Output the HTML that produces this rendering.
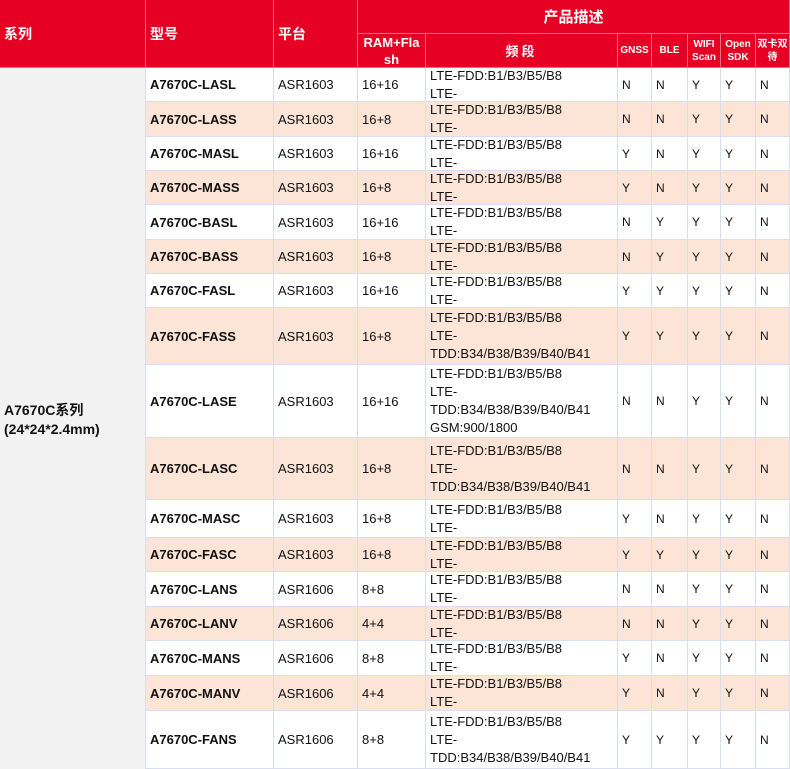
<!DOCTYPE html>
<html><head><meta charset="utf-8"><style>
*{margin:0;padding:0;box-sizing:border-box}
body{width:790px;height:769px;overflow:hidden;background:#fff;font-family:"Liberation Sans","Noto Sans CJK SC",sans-serif;color:#111;position:relative}
.h{position:absolute;background:#e60023;color:#fff;font-weight:bold;border-right:1px solid #f07080;border-bottom:1px solid #f07080;display:flex;align-items:center}
.r{position:absolute;left:146px;width:644px;display:flex}
.r>div{border-right:1px solid #d8def0;border-bottom:1px solid #d8def0;display:flex;align-items:center;overflow:hidden;padding-left:4px;font-size:13px}
.p{background:#fce4d6}
.c1{width:128px;font-weight:bold}.c2{width:84px}.c3{width:68px}
.c4{width:192px;line-height:18px}.c4 span{display:block}
.c5{width:34px}.c6{width:36px}.c7{width:33px}.c8{width:35px}.c9{width:34px}
.c5,.c6,.c7,.c8,.c9{font-size:12px!important}
.s{position:absolute;left:0;top:68px;width:146px;height:701px;background:#f2f2f2;border-right:1px solid #d8def0;display:flex;align-items:center;padding-left:4px;font-weight:bold;font-size:14px;line-height:19px;padding-top:2px}
</style></head><body>
<div class="h" style="left:0;top:0;width:146px;height:68px;padding-left:4px;font-size:14px">系列</div>
<div class="h" style="left:146px;top:0;width:128px;height:68px;padding-left:4px;font-size:14px">型号</div>
<div class="h" style="left:274px;top:0;width:84px;height:68px;padding-left:4px;font-size:14px">平台</div>
<div class="h" style="left:358px;top:0;width:432px;height:34px;justify-content:center;font-size:15px">产品描述</div>
<div class="h" style="left:358px;top:34px;width:68px;height:34px;justify-content:center;text-align:center;font-size:13px;line-height:17px">RAM+Fla<br>sh</div>
<div class="h" style="left:426px;top:34px;width:192px;height:34px;justify-content:center;font-size:13px;letter-spacing:3px">频段</div>
<div class="h" style="left:618px;top:34px;width:34px;height:34px;justify-content:center;font-size:10px">GNSS</div>
<div class="h" style="left:652px;top:34px;width:36px;height:34px;justify-content:center;font-size:10px">BLE</div>
<div class="h" style="left:688px;top:34px;width:33px;height:34px;justify-content:center;text-align:center;font-size:10px;line-height:13px">WIFI<br>Scan</div>
<div class="h" style="left:721px;top:34px;width:35px;height:34px;justify-content:center;text-align:center;font-size:10px;line-height:13px">Open<br>SDK</div>
<div class="h" style="left:756px;top:34px;width:34px;height:34px;justify-content:center;text-align:center;font-size:10px;line-height:13px">双卡双<br>待</div>
<div class="s">A7670C系列<br>(24*24*2.4mm)</div>

<div class="r" style="top:68px;height:34px"><div class="c1">A7670C-LASL</div><div class="c2">ASR1603</div><div class="c3">16+16</div><div class="c4"><div><span>LTE-FDD:B1/B3/B5/B8</span><span>LTE-</span></div></div><div class="c5">N</div><div class="c6">N</div><div class="c7">Y</div><div class="c8">Y</div><div class="c9">N</div></div>
<div class="r p" style="top:102px;height:35px"><div class="c1">A7670C-LASS</div><div class="c2">ASR1603</div><div class="c3">16+8</div><div class="c4"><div><span>LTE-FDD:B1/B3/B5/B8</span><span>LTE-</span></div></div><div class="c5">N</div><div class="c6">N</div><div class="c7">Y</div><div class="c8">Y</div><div class="c9">N</div></div>
<div class="r" style="top:137px;height:34px"><div class="c1">A7670C-MASL</div><div class="c2">ASR1603</div><div class="c3">16+16</div><div class="c4"><div><span>LTE-FDD:B1/B3/B5/B8</span><span>LTE-</span></div></div><div class="c5">Y</div><div class="c6">N</div><div class="c7">Y</div><div class="c8">Y</div><div class="c9">N</div></div>
<div class="r p" style="top:171px;height:34px"><div class="c1">A7670C-MASS</div><div class="c2">ASR1603</div><div class="c3">16+8</div><div class="c4"><div><span>LTE-FDD:B1/B3/B5/B8</span><span>LTE-</span></div></div><div class="c5">Y</div><div class="c6">N</div><div class="c7">Y</div><div class="c8">Y</div><div class="c9">N</div></div>
<div class="r" style="top:205px;height:35px"><div class="c1">A7670C-BASL</div><div class="c2">ASR1603</div><div class="c3">16+16</div><div class="c4"><div><span>LTE-FDD:B1/B3/B5/B8</span><span>LTE-</span></div></div><div class="c5">N</div><div class="c6">Y</div><div class="c7">Y</div><div class="c8">Y</div><div class="c9">N</div></div>
<div class="r p" style="top:240px;height:34px"><div class="c1">A7670C-BASS</div><div class="c2">ASR1603</div><div class="c3">16+8</div><div class="c4"><div><span>LTE-FDD:B1/B3/B5/B8</span><span>LTE-</span></div></div><div class="c5">N</div><div class="c6">Y</div><div class="c7">Y</div><div class="c8">Y</div><div class="c9">N</div></div>
<div class="r" style="top:274px;height:34px"><div class="c1">A7670C-FASL</div><div class="c2">ASR1603</div><div class="c3">16+16</div><div class="c4"><div><span>LTE-FDD:B1/B3/B5/B8</span><span>LTE-</span></div></div><div class="c5">Y</div><div class="c6">Y</div><div class="c7">Y</div><div class="c8">Y</div><div class="c9">N</div></div>
<div class="r p" style="top:308px;height:57px"><div class="c1">A7670C-FASS</div><div class="c2">ASR1603</div><div class="c3">16+8</div><div class="c4"><div><span>LTE-FDD:B1/B3/B5/B8</span><span>LTE-</span><span>TDD:B34/B38/B39/B40/B41</span></div></div><div class="c5">Y</div><div class="c6">Y</div><div class="c7">Y</div><div class="c8">Y</div><div class="c9">N</div></div>
<div class="r" style="top:365px;height:73px"><div class="c1">A7670C-LASE</div><div class="c2">ASR1603</div><div class="c3">16+16</div><div class="c4"><div><span>LTE-FDD:B1/B3/B5/B8</span><span>LTE-</span><span>TDD:B34/B38/B39/B40/B41</span><span>GSM:900/1800</span></div></div><div class="c5">N</div><div class="c6">N</div><div class="c7">Y</div><div class="c8">Y</div><div class="c9">N</div></div>
<div class="r p" style="top:438px;height:62px"><div class="c1">A7670C-LASC</div><div class="c2">ASR1603</div><div class="c3">16+8</div><div class="c4"><div><span>LTE-FDD:B1/B3/B5/B8</span><span>LTE-</span><span>TDD:B34/B38/B39/B40/B41</span></div></div><div class="c5">N</div><div class="c6">N</div><div class="c7">Y</div><div class="c8">Y</div><div class="c9">N</div></div>
<div class="r" style="top:500px;height:38px"><div class="c1">A7670C-MASC</div><div class="c2">ASR1603</div><div class="c3">16+8</div><div class="c4"><div><span>LTE-FDD:B1/B3/B5/B8</span><span>LTE-</span></div></div><div class="c5">Y</div><div class="c6">N</div><div class="c7">Y</div><div class="c8">Y</div><div class="c9">N</div></div>
<div class="r p" style="top:538px;height:34px"><div class="c1">A7670C-FASC</div><div class="c2">ASR1603</div><div class="c3">16+8</div><div class="c4"><div><span>LTE-FDD:B1/B3/B5/B8</span><span>LTE-</span></div></div><div class="c5">Y</div><div class="c6">Y</div><div class="c7">Y</div><div class="c8">Y</div><div class="c9">N</div></div>
<div class="r" style="top:572px;height:35px"><div class="c1">A7670C-LANS</div><div class="c2">ASR1606</div><div class="c3">8+8</div><div class="c4"><div><span>LTE-FDD:B1/B3/B5/B8</span><span>LTE-</span></div></div><div class="c5">N</div><div class="c6">N</div><div class="c7">Y</div><div class="c8">Y</div><div class="c9">N</div></div>
<div class="r p" style="top:607px;height:34px"><div class="c1">A7670C-LANV</div><div class="c2">ASR1606</div><div class="c3">4+4</div><div class="c4"><div><span>LTE-FDD:B1/B3/B5/B8</span><span>LTE-</span></div></div><div class="c5">N</div><div class="c6">N</div><div class="c7">Y</div><div class="c8">Y</div><div class="c9">N</div></div>
<div class="r" style="top:641px;height:35px"><div class="c1">A7670C-MANS</div><div class="c2">ASR1606</div><div class="c3">8+8</div><div class="c4"><div><span>LTE-FDD:B1/B3/B5/B8</span><span>LTE-</span></div></div><div class="c5">Y</div><div class="c6">N</div><div class="c7">Y</div><div class="c8">Y</div><div class="c9">N</div></div>
<div class="r p" style="top:676px;height:35px"><div class="c1">A7670C-MANV</div><div class="c2">ASR1606</div><div class="c3">4+4</div><div class="c4"><div><span>LTE-FDD:B1/B3/B5/B8</span><span>LTE-</span></div></div><div class="c5">Y</div><div class="c6">N</div><div class="c7">Y</div><div class="c8">Y</div><div class="c9">N</div></div>
<div class="r" style="top:711px;height:58px"><div class="c1">A7670C-FANS</div><div class="c2">ASR1606</div><div class="c3">8+8</div><div class="c4"><div><span>LTE-FDD:B1/B3/B5/B8</span><span>LTE-</span><span>TDD:B34/B38/B39/B40/B41</span></div></div><div class="c5">Y</div><div class="c6">Y</div><div class="c7">Y</div><div class="c8">Y</div><div class="c9">N</div></div>
</body></html>
